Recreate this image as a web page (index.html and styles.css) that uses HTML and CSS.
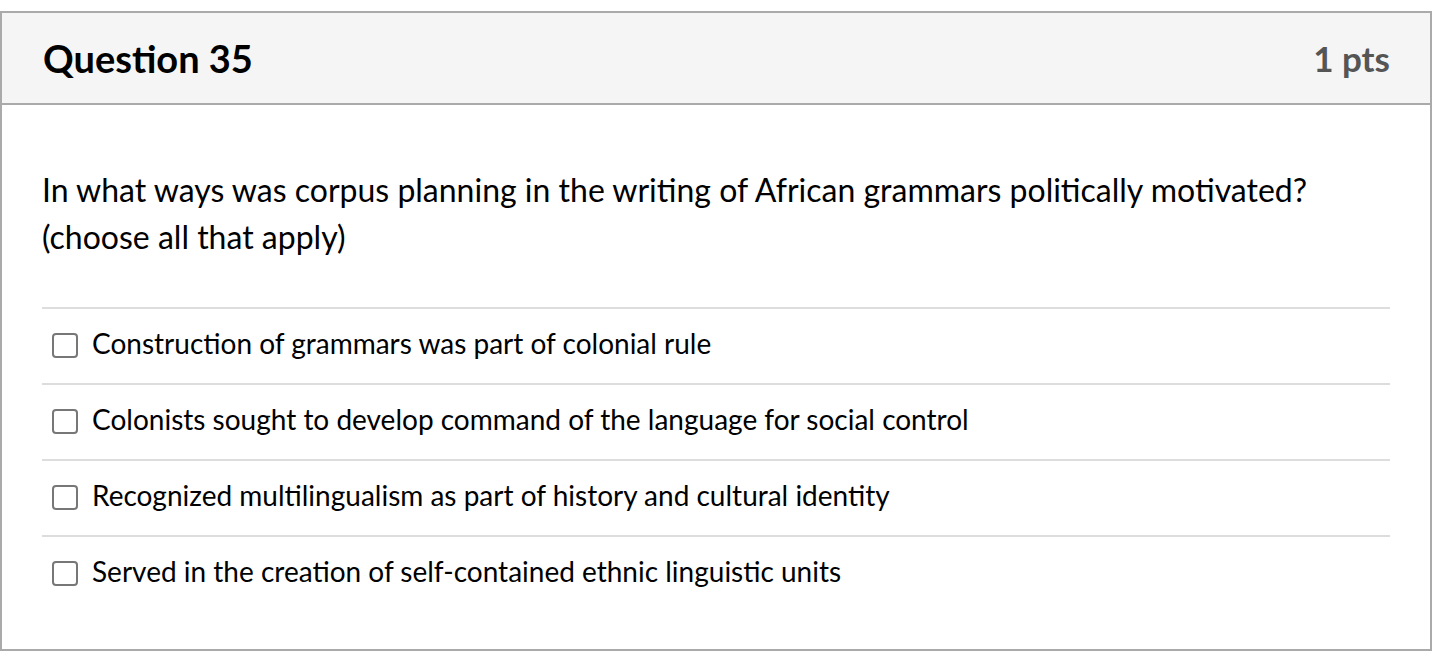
FILE: index.html
```html
<!DOCTYPE html>
<html>
<head>
<meta charset="utf-8">
<link rel="stylesheet" href="styles.css">
</head>
<body>
<div class="question">
  <div class="header">
    <div class="name">Question 35</div>
    <div class="points">1 pts</div>
  </div>
  <div class="content">
    <div class="text">In what ways was corpus planning in the writing of African grammars politically motivated?<br>(choose all that apply)</div>
    <div class="answers">
      <label class="answer"><span class="box"></span><span class="label">Construction of grammars was part of colonial rule</span></label>
      <label class="answer"><span class="box"></span><span class="label">Colonists sought to develop command of the language for social control</span></label>
      <label class="answer"><span class="box"></span><span class="label">Recognized multilingualism as part of history and cultural identity</span></label>
      <label class="answer"><span class="box"></span><span class="label">Served in the creation of self-contained ethnic linguistic units</span></label>
    </div>
  </div>
</div>
</body>
</html>
```
FILE: styles.css
```css
html, body {
  margin: 0;
  padding: 0;
  background: #fff;
}
body {
  padding-top: 11px;
  font-family: Lato, "Liberation Sans", sans-serif;
  color: #000;
}
.question {
  width: 1428px;
  border: 2px solid #aaaaaa;
  box-sizing: content-box;
}
.header {
  height: 90px;
  background: #f5f5f5;
  border-bottom: 2px solid #aaaaaa;
  display: flex;
  align-items: center;
  justify-content: space-between;
  padding: 0 40px 0 41px;
}
.name {
  font-weight: bold;
  font-size: 38px;
}
.points {
  font-weight: bold;
  font-size: 35px;
  color: #555;
}
.content {
  padding: 61px 40px 0 40px;
  height: 544px;
  box-sizing: border-box;
}
.text {
  font-size: 32px;
  line-height: 47px;
  margin-bottom: 47px;
}
.answers {
  display: flex;
  flex-direction: column;
}
.answer {
  display: flex;
  align-items: center;
  height: 76px;
  padding-bottom: 7px;
  box-sizing: border-box;
  border-top: 2px solid #dddddd;
  font-size: 28px;
}
.box {
  width: 22px;
  height: 21px;
  border: 2px solid #777;
  border-radius: 4px;
  margin: 6px 14px 0 10px;
  flex: none;
}
```
